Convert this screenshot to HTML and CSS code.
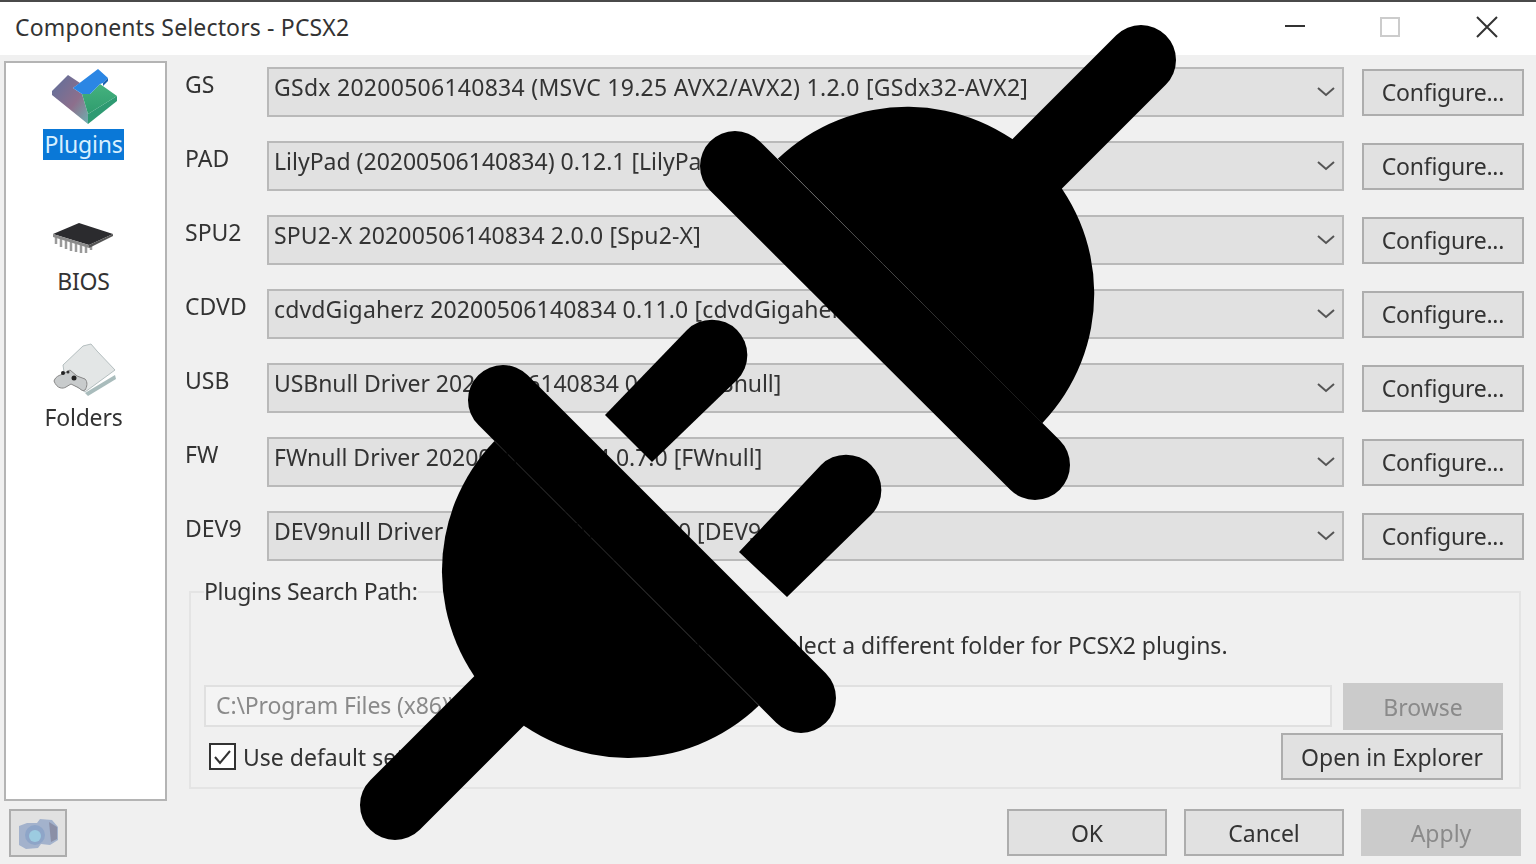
FILE: index.html
```html
<!DOCTYPE html>
<html lang="en">
<head>
    <meta charset="UTF-8">
    <meta name="viewport" content="width=device-width, initial-scale=1.0">
    <title>Components Selectors - PCSX2</title>
    <link rel="stylesheet" href="styles.css">
</head>
<body>
    <div class="window">
        <div class="titlebar">
            <span class="title">Components Selectors - PCSX2</span>
            <div class="win-controls">
                <svg width="24" height="24" viewBox="0 0 24 24"><path d="M0 11h20" class="win-line"/></svg>
                <svg width="24" height="24" viewBox="0 0 24 24"><rect x="1" y="3" width="18" height="18" class="win-max"/></svg>
                <svg width="24" height="24" viewBox="0 0 24 24"><path d="M2 2l20 20M22 2L2 22" class="win-line"/></svg>
            </div>
        </div>

        <div class="content">
            <div class="side-col">
                <div class="sidebar">
                    <div class="side-item">
                        <svg class="side-icon" width="70" height="58" viewBox="0 0 70 58">
                            <defs>
                                <linearGradient id="pluginGrey" x1="0" y1="0" x2="1" y2="1">
                                    <stop offset="0" stop-color="#5d6f9c"/>
                                    <stop offset="0.6" stop-color="#8d6f8c"/>
                                    <stop offset="1" stop-color="#6fb0b0"/>
                                </linearGradient>
                                <linearGradient id="pluginGreen" x1="0" y1="0" x2="0" y2="1">
                                    <stop offset="0" stop-color="#45b27e"/>
                                    <stop offset="1" stop-color="#2f9c6e"/>
                                </linearGradient>
                            </defs>
                            <polygon points="4,24 20,8 32,16 25,21 34,27 40,47 40,57 4,28" fill="url(#pluginGrey)"/>
                            <polygon points="34,27 42,27 52,17 69,29 40,47" fill="url(#pluginGreen)"/>
                            <polygon points="40,47 69,29 69,34 40,57" fill="#2e9a72"/>
                            <polygon points="25,21 50,2 60,11 55,16 52,17 42,27 34,27" fill="#2b86e4"/>
                            <polygon points="60,11 60,14 55,19 55,16" fill="#1c62ae"/>
                        </svg>
                        <span class="side-label side-label-on">Plugins</span>
                    </div>
                    <div class="side-item side-item-bios">
                        <svg class="side-icon" width="64" height="34" viewBox="0 0 64 34">
                            <path d="M4 17v7M9 19v8M14 20v9M19 22v9M24 23v9M29 25v8M34 26v7M39 25v5" class="chip-pins"/>
                            <polygon points="27,3 1,14 37,25 61,14" fill="#2b2b2e"/>
                            <polygon points="1,14 37,25 37,28 1,17" fill="#8a8a8a"/>
                            <polygon points="37,25 61,14 61,16 37,28" fill="#555"/>
                        </svg>
                        <span class="side-label">BIOS</span>
                    </div>
                    <div class="side-item side-item-folders">
                        <svg class="side-icon" width="70" height="54" viewBox="0 0 70 54">
                            <polygon points="36,50 66,32 67,36 39,53" fill="#a9bcbc"/>
                            <polygon points="14,22 34,3 42,1 48,8 66,27 36,49 16,36" fill="#e3e6e6" stroke="#b5bfc0"/>
                            <path d="M5 38c2-6 8-6 11-8l5-3 7 6 8 3c3 3 2 8 0 11-3 2-5-2-8-3l-6-3-5 3c-3 2-9 2-12-6z" fill="#c8cbcc" stroke="#888"/>
                            <circle cx="14" cy="30" r="2" fill="#222"/>
                            <circle cx="25" cy="35" r="2.5" fill="#222"/>
                            <circle cx="19" cy="29" r="1.5" fill="#333"/>
                        </svg>
                        <span class="side-label">Folders</span>
                    </div>
                </div>
                <button class="btn btn-shot">
                    <svg width="44" height="34" viewBox="0 0 44 34">
                        <path d="M3 10l8-3 10 0 3-4 12 1 6 7v13l-8 5-9-1-3 4-12 1-7-4z" fill="#a3b2cc"/>
                        <circle cx="19" cy="19" r="10" fill="#8ea5c8"/>
                        <circle cx="19" cy="20" r="6" fill="#9ccbe0"/>
                        <path d="M33 6l8 5v12l-6 3z" fill="#8b8fa6"/>
                    </svg>
                </button>
            </div>

            <div class="panel">
                <div class="plugin-rows">
                    <div class="plugin-row">
                        <span class="plugin-name">GS</span>
                        <div class="combo"><span class="combo-wide">GSdx 20200506140834 (MSVC 19.25 AVX2/AVX2) 1.2.0 [GSdx32-AVX2]</span>
                            <svg class="chevron" width="18" height="10" viewBox="0 0 18 10"><path d="M1 1l8 7 8-7"/></svg></div>
                        <button class="btn btn-config">Configure...</button>
                    </div>
                    <div class="plugin-row">
                        <span class="plugin-name">PAD</span>
                        <div class="combo"><span>LilyPad (20200506140834) 0.12.1 [LilyPad]</span>
                            <svg class="chevron" width="18" height="10" viewBox="0 0 18 10"><path d="M1 1l8 7 8-7"/></svg></div>
                        <button class="btn btn-config">Configure...</button>
                    </div>
                    <div class="plugin-row">
                        <span class="plugin-name">SPU2</span>
                        <div class="combo"><span class="combo-mid">SPU2-X 20200506140834 2.0.0 [Spu2-X]</span>
                            <svg class="chevron" width="18" height="10" viewBox="0 0 18 10"><path d="M1 1l8 7 8-7"/></svg></div>
                        <button class="btn btn-config">Configure...</button>
                    </div>
                    <div class="plugin-row">
                        <span class="plugin-name">CDVD</span>
                        <div class="combo"><span class="combo-mid">cdvdGigaherz 20200506140834 0.11.0 [cdvdGigaherz]</span>
                            <svg class="chevron" width="18" height="10" viewBox="0 0 18 10"><path d="M1 1l8 7 8-7"/></svg></div>
                        <button class="btn btn-config">Configure...</button>
                    </div>
                    <div class="plugin-row">
                        <span class="plugin-name">USB</span>
                        <div class="combo"><span class="combo-tight">USBnull Driver 20200506140834 0.7.0 [USBnull]</span>
                            <svg class="chevron" width="18" height="10" viewBox="0 0 18 10"><path d="M1 1l8 7 8-7"/></svg></div>
                        <button class="btn btn-config">Configure...</button>
                    </div>
                    <div class="plugin-row">
                        <span class="plugin-name">FW</span>
                        <div class="combo"><span>FWnull Driver 20200506140834 0.7.0 [FWnull]</span>
                            <svg class="chevron" width="18" height="10" viewBox="0 0 18 10"><path d="M1 1l8 7 8-7"/></svg></div>
                        <button class="btn btn-config">Configure...</button>
                    </div>
                    <div class="plugin-row">
                        <span class="plugin-name">DEV9</span>
                        <div class="combo"><span>DEV9null Driver 20200506140834 0.4.0 [DEV9null]</span>
                            <svg class="chevron" width="18" height="10" viewBox="0 0 18 10"><path d="M1 1l8 7 8-7"/></svg></div>
                        <button class="btn btn-config">Configure...</button>
                    </div>
                </div>

                <fieldset class="search-group">
                    <legend>Plugins Search Path:</legend>
                    <p class="search-hint">Click the Browse button to select a different folder for PCSX2 plugins.</p>
                    <div class="path-row">
                        <div class="path-input">C:\Program Files (x86)\PCSX2\plugins</div>
                        <button class="btn btn-off btn-browse">Browse</button>
                    </div>
                    <div class="default-row">
                        <label class="check-label">
                            <svg class="check-box" width="27" height="27" viewBox="0 0 27 27"><rect x="1" y="1" width="25" height="25"/><path d="M6 14l5 6 10-12"/></svg>
                            Use default setting
                        </label>
                        <button class="btn btn-explorer">Open in Explorer</button>
                    </div>
                </fieldset>

                <div class="dialog-buttons">
                    <button class="btn btn-dialog">OK</button>
                    <button class="btn btn-dialog">Cancel</button>
                    <button class="btn btn-dialog btn-off">Apply</button>
                </div>
            </div>
        </div>
    </div>

    <!-- unplugged icon lies over the whole dialog -->
    <svg class="plug-overlay" width="1536" height="864" viewBox="0 0 1536 864">
        <path d="M777.8 158.8A187 187 0 0 1 1042.2 423.2Z"/>
        <path d="M1141 60L1030 171" class="plug-stroke"/>
        <path d="M735 166L1035 465" class="plug-stroke"/>
        <path d="M494.5 441A187 187 0 0 0 758.92 705.42Z"/>
        <path d="M395 805L515 685" class="plug-stroke"/>
        <path d="M503 400L801 698" class="plug-stroke"/>
        <path d="M605 415L687 330A35 35 0 0 1 737 380L652 462Z"/>
        <path d="M739 552L821 465A35 35 0 0 1 871 515L787 597Z"/>
    </svg>
</body>
</html>
```

FILE: styles.css
```css
* {
    box-sizing: border-box;
}
body {
    margin: 0;
    width: 1536px;
    height: 864px;
    overflow: hidden;
    position: relative;
    background: #f0f0f0;
    color: #333;
    font-family: "Noto Sans", "Open Sans", sans-serif;
    font-size: 23px;
}
/* the source is a scaled up capture, so everything is a little soft */
.window {
    height: 864px;
    display: flex;
    flex-direction: column;
    border-top: 2px solid #4a4a4a;
    filter: blur(0.4px);
}
.titlebar {
    height: 53px;
    background: #fff;
    display: flex;
    align-items: center;
    justify-content: space-between;
    padding: 0 37px 3px 15px;
    flex: none;
}
.title {
    color: #333;
    letter-spacing: 0.15px;
}
.win-controls {
    display: flex;
    align-items: center;
    gap: 71px;
}
.win-line {
    fill: none;
    stroke: #333;
    stroke-width: 2;
}
.win-max {
    fill: none;
    stroke: #ccc;
    stroke-width: 2;
}
.content {
    flex: 1;
    display: flex;
    padding: 6px 12px 8px 4px;
    gap: 18px;
}
.side-col {
    width: 163px;
    display: flex;
    flex-direction: column;
    gap: 8px;
    flex: none;
}
.sidebar {
    height: 740px;
    background: #fff;
    border: 2px solid #b4b4b4;
    display: flex;
    flex-direction: column;
    align-items: center;
    padding: 4px 4px 0 0;
}
.side-item {
    display: flex;
    flex-direction: column;
    align-items: center;
}
.side-icon {
    display: block;
}
.side-item-bios {
    margin-top: 60px;
}
.side-item-bios .side-label {
    margin-top: 12px;
}
.side-item-folders {
    margin-top: 46px;
}
.side-item-folders .side-label {
    margin-top: 5px;
}
.side-label {
    line-height: 31px;
    padding: 0 2px;
    letter-spacing: -0.2px;
}
.side-label-on {
    background: #0a78d7;
    color: #d8f0ff;
    margin-top: 4px;
}
.chip-pins {
    fill: none;
    stroke: #9a9a9a;
    stroke-width: 2.5;
}
.btn {
    font: inherit;
    color: #333;
    background: #e1e1e1;
    border: 2px solid #adadad;
    padding: 0;
    display: block;
}
.btn-off {
    background: #cbcbcb;
    border-color: #cbcbcb;
    color: #8a8a8a;
}
.btn-shot {
    width: 58px;
    height: 48px;
    margin-left: 5px;
    display: flex;
    align-items: center;
    justify-content: center;
}
.panel {
    flex: 1;
    display: flex;
    flex-direction: column;
    min-width: 0;
}
.plugin-rows {
    display: flex;
    flex-direction: column;
    gap: 24px;
    padding-top: 6px;
}
.plugin-row {
    height: 50px;
    display: flex;
    align-items: center;
    gap: 18px;
}
.plugin-name {
    width: 82px;
    margin-right: -18px;
    align-self: flex-start;
    line-height: 34px;
}
.combo {
    width: 1077px;
    height: 50px;
    background: #e1e1e1;
    border: 2px solid #b9b9b9;
    display: flex;
    align-items: center;
    justify-content: space-between;
    padding: 0 7px 0 5px;
    white-space: nowrap;
    line-height: 36px;
}
.combo span {
    align-self: flex-start;
}
.combo .combo-wide {
    letter-spacing: 0.27px;
}
.combo .combo-mid {
    letter-spacing: 0.15px;
}
.combo .combo-tight {
    letter-spacing: -0.08px;
}
.chevron path {
    fill: none;
    stroke: #555;
    stroke-width: 2;
}
.btn-config {
    width: 162px;
    height: 47px;
    letter-spacing: -0.25px;
}
.search-group {
    margin: 15px 5px 0 4px;
    padding: 0 16px 5px 13px;
    border: 2px solid #e4e4e4;
    height: 213px;
}
.search-group legend {
    padding: 0;
    line-height: 31px;
    letter-spacing: -0.3px;
}
.search-hint {
    margin: 23px 0 0;
    padding-left: 280px;
    line-height: 31px;
    height: 53px;
    white-space: nowrap;
}
.path-row {
    display: flex;
    gap: 11px;
    align-items: flex-start;
}
.path-input {
    width: 1128px;
    height: 42px;
    margin-top: 2px;
    padding-left: 10px;
    border: 2px solid #e0e0e0;
    background: #f4f4f4;
    color: #8a8a8a;
    line-height: 37px;
    white-space: nowrap;
    letter-spacing: -0.15px;
}
.btn-browse {
    width: 160px;
    height: 47px;
}
.default-row {
    display: flex;
    justify-content: space-between;
    align-items: center;
    margin-top: 3px;
}
.check-label {
    display: flex;
    align-items: center;
    gap: 7px;
    margin-left: 5px;
}
.check-box rect {
    fill: #fff;
    stroke: #333;
    stroke-width: 2;
}
.check-box path {
    fill: none;
    stroke: #333;
    stroke-width: 2;
}
.btn-explorer {
    width: 222px;
    height: 47px;
}
.dialog-buttons {
    display: flex;
    gap: 17px;
    margin-top: 20px;
    margin-left: 822px;
}
.btn-dialog {
    width: 160px;
    height: 47px;
}
.plug-overlay {
    position: absolute;
    left: 0;
    top: 0;
}
.plug-stroke {
    fill: none;
    stroke: #000;
    stroke-width: 70;
    stroke-linecap: round;
}
```
